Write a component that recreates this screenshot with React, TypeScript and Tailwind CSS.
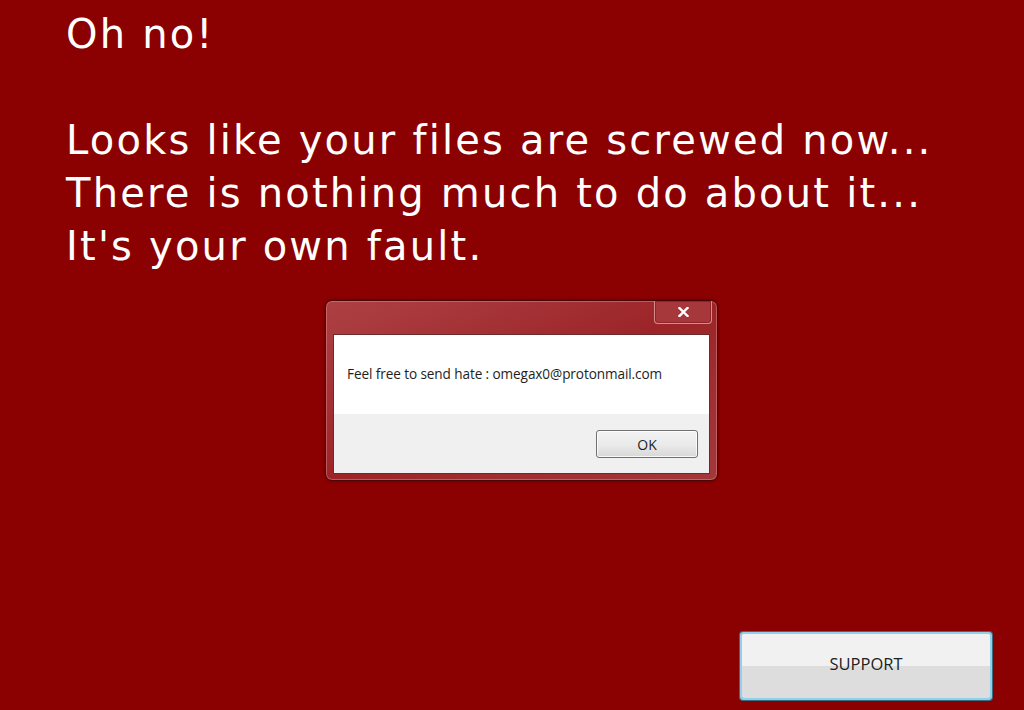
import React from "react";

export default function App() {
  return (
    <div className="w-[1024px] h-[710px] bg-[#8b0000] flex flex-col overflow-hidden" style={{ fontFamily: '"DejaVu Sans", Verdana, sans-serif' }}>
      <div className="pl-[66px] pt-[8px] text-white text-[40px] leading-[53px] tracking-[2.2px]">
        <div>Oh no!</div>
        <div>&nbsp;</div>
        <div>Looks like your files are screwed now...</div>
        <div>There is nothing much to do about it...</div>
        <div>It's your own fault.</div>
      </div>

      <div className="ml-[325px] mt-[27px] w-[393px] h-[181px] rounded-[7px] border border-[#4a0507] bg-gradient-to-br from-[#ad4044] via-[#9c2428] to-[#a2383c] shadow-[inset_0_0_0_1px_rgba(230,150,150,0.45),0_0_3px_rgba(0,0,0,0.35)] flex flex-col px-[7px] pb-[6px]">
        <div className="h-[33px] flex justify-end items-start">
          <div className="w-[58px] h-[23px] -mr-[2px] rounded-b-[4px] border border-t-0 border-[#d98a8d] bg-[#a6373b] flex items-center justify-center shadow-[inset_0_0_0_1px_rgba(120,20,20,0.5)]">
            <svg width="11" height="10" viewBox="0 0 11 10">
              <path d="M1.5 1 L9.5 9 M9.5 1 L1.5 9" stroke="#ffffff" strokeWidth="2.4" strokeLinecap="square" />
            </svg>
          </div>
        </div>
        <div className="flex-1 border border-[#6b2a2c] flex flex-col" style={{ fontFamily: '"Open Sans", "Noto Sans", sans-serif' }}>
          <div className="h-[79px] bg-white flex items-center pl-[13px] text-[13.6px] text-[#1e1e1e] tracking-[-0.1px]">
            Feel free to send hate : omegax0@protonmail.com
          </div>
          <div className="flex-1 bg-[#f0f0f0] flex justify-end items-start pt-[16px] pr-[11px]">
            <div className="w-[102px] h-[28px] rounded-[3px] border border-[#707070] bg-gradient-to-b from-[#f2f2f2] via-[#ebebeb] to-[#d8d8d8] flex items-center justify-center text-[14px] text-[#1e1e1e] shadow-[inset_0_0_0_1px_rgba(255,255,255,0.8)]">
              OK
            </div>
          </div>
        </div>
      </div>

      <div className="flex-1" />

      <div className="flex justify-end pr-[32px] pb-[10px]">
        <div className="w-[252px] h-[68px] rounded-[3px] border-2 border-[#8fd0ec] flex flex-col overflow-hidden shadow-[0_0_0_1px_#3c6c80]" style={{ fontFamily: '"Open Sans", "Noto Sans", sans-serif' }}>
          <div className="relative flex-1 flex flex-col">
            <div className="h-1/2 bg-[#f1f1f1]" />
            <div className="h-1/2 bg-[#dddddd]" />
            <div className="absolute inset-0 flex items-center justify-center pb-[3px] text-[16.5px] text-[#222222]">SUPPORT</div>
          </div>
        </div>
      </div>
    </div>
  );
}
